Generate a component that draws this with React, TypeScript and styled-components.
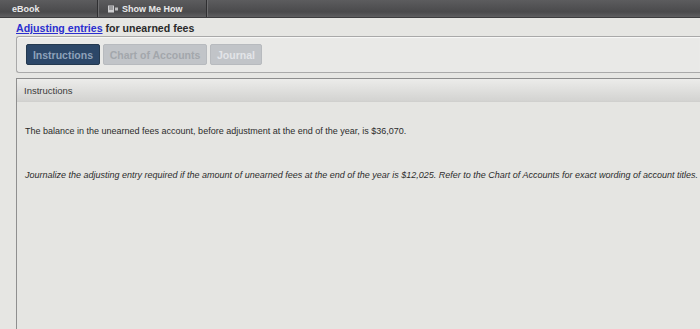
import React from 'react';
import styled, { createGlobalStyle } from 'styled-components';

const GlobalStyle = createGlobalStyle`
	html, body {
		margin: 0;
		padding: 0;
		background: #e6e6e3;
		font-family: 'Liberation Sans', Arial, sans-serif;
		overflow: hidden;
	}
`;

const Page = styled.div`
	width: 700px;
	height: 329px;
	display: flex;
	flex-direction: column;
	background: #e6e6e3;
`;

const TopBar = styled.div`
	height: 17px;
	display: flex;
	align-items: stretch;
	background: linear-gradient(#5c5c5e, #4a4a4c 70%, #5e5e60);
	border-bottom: 1px solid #3d3d3f;
`;

const TopTab = styled.div<{ width: number }>`
	width: ${({ width }) => width}px;
	display: flex;
	align-items: center;
	gap: 4px;
	padding-left: ${({ width }) => (width > 100 ? 10 : 12)}px;
	box-sizing: border-box;
	border-right: 1px solid #2f2f31;
	box-shadow: 1px 0 0 #6e6e70;
	color: #e9e9ea;
	font-size: 9px;
	font-weight: bold;
	white-space: nowrap;
`;

const Content = styled.div`
	flex: 1;
	display: flex;
	flex-direction: column;
	padding-left: 16px;
`;

const Title = styled.div`
	margin-top: 4px;
	height: 14px;
	font-size: 10.6px;
	font-weight: bold;
	color: #2a2a2a;
	white-space: nowrap;
`;

const TitleLink = styled.a`
	color: #2b2fcf;
	text-decoration: underline;
	text-decoration-thickness: 1px;
`;

const TabBox = styled.div`
	margin-top: 0;
	height: 35px;
	display: flex;
	align-items: center;
	gap: 3px;
	padding-left: 9px;
	border: 1px solid #a9a9a9;
	border-right: none;
	border-radius: 3px 0 0 3px;
	background: #e9e9e7;
	box-shadow: inset 0 1px 1px rgba(255, 255, 255, 0.7);
`;

const TabButton = styled.div<{ active?: boolean; width: number; light?: boolean }>`
	width: ${({ width }) => width}px;
	height: 21px;
	display: flex;
	align-items: center;
	justify-content: center;
	border-radius: 2px;
	font-size: 10.5px;
	font-weight: bold;
	white-space: nowrap;
	background: ${({ active }) => (active ? '#2c4768' : '#c1c4c8')};
	color: ${({ active, light }) => (active ? '#8ea2ba' : light ? '#e3e5e8' : '#a3a7ac')};
	border: 1px solid ${({ active }) => (active ? '#24394f' : '#b7babe')};
	box-sizing: border-box;
`;

const Panel = styled.div`
	margin-top: 5px;
	flex: 1;
	display: flex;
	flex-direction: column;
	border-left: 1px solid #8f8f8f;
	border-top: 1px solid #8d8d8d;
	background: #e5e5e2;
`;

const PanelHeader = styled.div`
	height: 22px;
	display: flex;
	align-items: center;
	padding-left: 7px;
	font-size: 9.5px;
	color: #3a3a3a;
	background: linear-gradient(#ececea, #d3d3d1);
	border-bottom: 1px solid #d0d0ce;
`;

const Paragraph = styled.p<{ slant?: boolean }>`
	margin: 0;
	padding-left: 8px;
	font-size: 9px;
	color: #2c2c2c;
	white-space: nowrap;
	font-style: ${({ slant }) => (slant ? 'italic' : 'normal')};
`;

const First = styled(Paragraph)`
	margin-top: 24px;
`;

const Second = styled(Paragraph)`
	margin-top: 34px;
`;

const BookIcon = () => (
	<svg width="10" height="8" viewBox="0 0 10 8">
		<rect x="0" y="0.5" width="6" height="7" fill="#cfcfd1" />
		<rect x="1" y="1.5" width="4" height="1" fill="#6a6a6c" />
		<rect x="1" y="3.5" width="4" height="1" fill="#6a6a6c" />
		<rect x="7" y="2.5" width="3" height="3" fill="#bdbdbf" />
	</svg>
);

const App = () => {
	return (
		<Page>
			<GlobalStyle />
			<TopBar>
				<TopTab width={98}>eBook</TopTab>
				<TopTab width={109}>
					<BookIcon />
					Show Me How
				</TopTab>
			</TopBar>
			<Content>
				<Title>
					<TitleLink href="#">Adjusting entries</TitleLink> for unearned fees
				</Title>
				<TabBox>
					<TabButton active width={74}>
						Instructions
					</TabButton>
					<TabButton width={104}>Chart of Accounts</TabButton>
					<TabButton width={52} light>
						Journal
					</TabButton>
				</TabBox>
				<Panel>
					<PanelHeader>Instructions</PanelHeader>
					<First>The balance in the unearned fees account, before adjustment at the end of the year, is $36,070.</First>
					<Second slant>
						Journalize the adjusting entry required if the amount of unearned fees at the end of the year is $12,025. Refer to the Chart of Accounts for exact wording of account titles.
					</Second>
				</Panel>
			</Content>
		</Page>
	);
};

export default App;
